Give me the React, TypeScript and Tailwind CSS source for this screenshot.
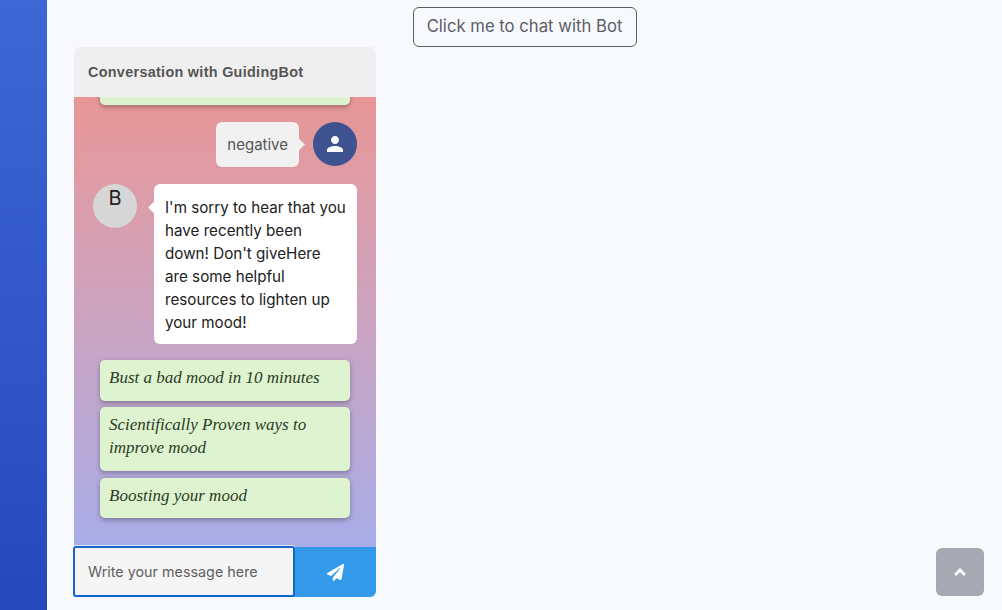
import { FaPaperPlane, FaAngleUp } from "react-icons/fa";
import { MdPerson } from "react-icons/md";

const inter = "font-['Inter',sans-serif]";

export default function App() {
  return (
    <div className={`relative flex h-[610px] w-[1002px] overflow-hidden bg-[#f8f9fc] ${inter}`}>
      <div className="h-full w-[47px] shrink-0 bg-gradient-to-b from-[#3e66d4] to-[#2549bd]" />
      <main className="flex flex-1 flex-col">
        <div className="flex justify-center pt-[7px]">
          <button className="h-10 w-56 rounded-[6px] border border-[#5a5c69] bg-transparent pb-px text-[16.7px] leading-[37px] text-[#5a5c69]">
            Click me to chat with Bot
          </button>
        </div>
        <section className="ml-[27px] flex h-[550px] w-[302px] flex-col">
          <header className="flex h-[50px] shrink-0 items-center rounded-t-[6px] bg-[#efefef] pl-[14px] pt-[2px] font-['Liberation_Sans',sans-serif] text-[14.4px] font-bold tracking-[0.3px] text-[#555555]">
            Conversation with GuidingBot
          </header>
          <div className="flex min-h-0 flex-1 flex-col justify-end overflow-hidden bg-gradient-to-b from-[#e89696] to-[#a8ade8] pb-[29px]">
            <div className="mx-[26px] h-[48px] shrink-0 rounded-[5px] bg-[#def3cf] shadow-[0_2px_5px_rgba(0,0,0,0.3)]" />
            <div className="mt-[17px] flex shrink-0 items-start justify-end pr-[19px]">
              <div className="relative flex h-[45px] items-center rounded-[6px] bg-[#f1f1f1] px-[11px] pt-[2px] text-[15px] text-[#555555]">
                negative
                <span className="absolute right-[-4px] top-[18px] h-[9px] w-[9px] rotate-45 bg-[#f1f1f1]" />
              </div>
              <div className="ml-[14px] flex h-[44px] w-[44px] items-center justify-center rounded-full bg-[#3e5290] text-[24px] text-white">
                <MdPerson />
              </div>
            </div>
            <div className="mt-[17px] flex shrink-0 items-start pl-[19px] pr-[19px]">
              <div className="flex h-[44px] w-[44px] justify-center rounded-full bg-[#d6d6d6] text-[20px] leading-[28px] text-[#222222]">
                B
              </div>
              <div className="relative ml-[17px] w-[203px] rounded-[6px] bg-white px-[11px] pb-[10px] pt-[12px] text-[15.2px] leading-[23px] text-[#212121]">
                I'm sorry to hear that you have recently been down! Don't giveHere are some helpful resources to lighten up your mood!
                <span className="absolute left-[-4px] top-[19px] h-[9px] w-[9px] rotate-45 bg-white" />
              </div>
            </div>
            <div className="mt-[16px] flex shrink-0 flex-col gap-[6px] px-[26px] font-['Liberation_Serif',serif] text-[17px] italic leading-[23px] text-[#2b3b26]">
              <a className="block h-[41px] rounded-[5px] bg-[#def3cf] px-[9px] pt-[6px] shadow-[0_2px_5px_rgba(0,0,0,0.3)]">Bust a bad mood in 10 minutes</a>
              <a className="block h-[64px] rounded-[5px] bg-[#def3cf] px-[9px] pt-[6px] shadow-[0_2px_5px_rgba(0,0,0,0.3)]">Scientifically Proven ways to improve mood</a>
              <a className="mt-px block h-[40px] rounded-[5px] bg-[#def3cf] px-[9px] pt-[6px] shadow-[0_2px_5px_rgba(0,0,0,0.3)]">Boosting your mood</a>
            </div>
          </div>
          <footer className="flex h-[50px] shrink-0 rounded-b-[6px] bg-[#329ae9]">
            <div className="z-10 -ml-px -mt-px flex h-[51px] w-[222px] items-center rounded-[3px] border-2 border-[#1565cf] bg-[#f5f5f5] pl-[13px] text-[14.35px] text-[#5f5f5f] shadow-[0_-1px_0_rgba(255,255,255,0.7)]">
              Write your message here
            </div>
            <button className="flex flex-1 items-center justify-center text-[17px] text-white">
              <FaPaperPlane />
            </button>
          </footer>
        </section>
      </main>
      <button className="absolute right-[18px] top-[548px] flex h-12 w-12 items-center justify-center rounded-[6px] bg-[#a6a8b2] text-[18px] text-white">
        <FaAngleUp />
      </button>
    </div>
  );
}
